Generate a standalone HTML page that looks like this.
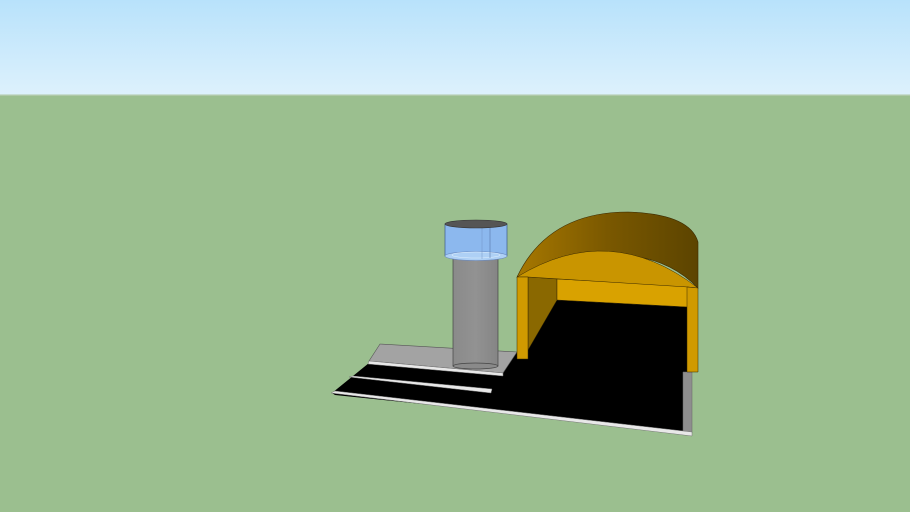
<!DOCTYPE html>
<html><head><meta charset="utf-8"><style>html,body{margin:0;padding:0;width:910px;height:512px;overflow:hidden}svg{display:block}</style></head>
<body>
<svg width="910" height="512" viewBox="0 0 910 512" xmlns="http://www.w3.org/2000/svg">
<defs>
<linearGradient id="sky" x1="0" y1="0" x2="0" y2="1"><stop offset="0" stop-color="#b8e2fb"/><stop offset="1" stop-color="#ddf1fc"/></linearGradient>
<linearGradient id="roof" x1="0" y1="0" x2="1" y2="0"><stop offset="0" stop-color="#a77800"/><stop offset="0.5" stop-color="#7a5800"/><stop offset="1" stop-color="#5c4400"/></linearGradient>
<linearGradient id="col" x1="0" y1="0" x2="1" y2="0"><stop offset="0" stop-color="#8a8a8a"/><stop offset="0.5" stop-color="#929292"/><stop offset="1" stop-color="#858585"/></linearGradient>
</defs>
<rect width="910" height="95" fill="url(#sky)"/>
<rect y="95" width="910" height="417" fill="#9bbf8f"/>
<rect y="94.5" width="910" height="1.5" fill="#b0c9a8"/>
<!-- black base -->
<polygon points="332,393 369,363 517,352 528,345 557,300 687,307 687,372 683,372 683,431 335,395" fill="#000"/>
<polygon points="683,372 692,372 692,433 683,431" fill="#8e8e8e" stroke="#666" stroke-width="0.5"/>
<!-- white edges -->
<polygon points="331,393 335,391 692,432 692,436" fill="#e8e8e8" stroke="#777" stroke-width="0.5"/>
<polygon points="349,377 353,376 492,389 491,393" fill="#e8e8e8" stroke="#777" stroke-width="0.5"/>
<!-- platform -->
<polygon points="380,344 517,352 503,373 369,361" fill="#a3a3a3" stroke="#555" stroke-width="0.6"/>
<polygon points="369,361 503,373 503,376 368,364" fill="#e8e8e8" stroke="#777" stroke-width="0.5"/>
<!-- column -->
<rect x="453" y="256" width="45" height="110" fill="url(#col)" stroke="#444" stroke-width="0.7"/>
<ellipse cx="475.5" cy="366" rx="22.5" ry="3" fill="#8a8a8a" stroke="#444" stroke-width="0.7"/>
<!-- glass -->
<rect x="445" y="224" width="62" height="32" fill="#8cb8ee" stroke="#3a5a8a" stroke-width="0.7"/>
<ellipse cx="476" cy="256" rx="31" ry="4.5" fill="#aed0f5" stroke="#6a8ac0" stroke-width="0.6"/>
<ellipse cx="476" cy="255" rx="24" ry="3" fill="none" stroke="#e0eefc" stroke-width="0.6"/>
<line x1="490" y1="225" x2="490" y2="258" stroke="#4a6a9a" stroke-width="0.5"/>
<line x1="482" y1="225" x2="482" y2="259" stroke="#6a8aba" stroke-width="0.4"/>
<ellipse cx="476" cy="224" rx="31" ry="4" fill="#555" stroke="#333" stroke-width="0.6"/>
<!-- hangar -->
<path d="M517,277 Q548,212 628,212 Q690,214 698,242 L698,288 Q640,228 517,277 Z" fill="url(#roof)" stroke="#3a2a00" stroke-width="0.6"/>
<polygon points="528,277 557,279 557,300 528,350" fill="#8a6800" stroke="#3a2a00" stroke-width="0.5"/>
<polygon points="557,279 688,286 688,307 557,300" fill="#d9a200" stroke="#3a2a00" stroke-width="0.5"/>
<path d="M517,277 Q610,220 698,288 L688,287 L528,277 Z" fill="#c99500" stroke="#3a2a00" stroke-width="0.5"/>
<polygon points="517,277 528,277 528,359 517,359" fill="#d09a00" stroke="#3a2a00" stroke-width="0.5"/>
<polygon points="687,287 698,288 698,372 687,372" fill="#d09a00" stroke="#3a2a00" stroke-width="0.5"/>
</svg>
</body></html>
